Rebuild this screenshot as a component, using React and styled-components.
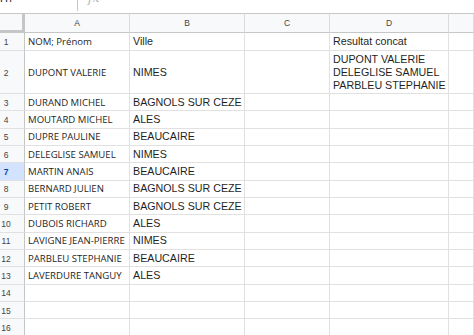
import React from "react";
import styled, { createGlobalStyle } from "styled-components";

const Global = createGlobalStyle`
  html, body { margin: 0; padding: 0; background: #fff; }
  body { width: 474px; height: 335px; overflow: hidden; font-family: "Liberation Sans", Arial, sans-serif; }
`;

const COLS = "25px 105px 115px 85px 119px 1fr";

const Page = styled.div`
  width: 474px;
  height: 335px;
  overflow: hidden;
  display: flex;
  flex-direction: column;
`;

const FormulaBar = styled.div`
  height: 13px;
  flex: none;
  overflow: hidden;
  display: flex;
  align-items: flex-end;
  background: #fff;
`;

const FormulaInner = styled.div`
  display: flex;
  align-items: center;
  height: 22px;
  margin-bottom: 4px;
`;

const NameBox = styled.div`
  width: 56px;
  font-size: 11px;
  color: #1f1f1f;
  font-family: "Liberation Sans", Arial, sans-serif;
`;

const Caret = styled.div`
  width: 0;
  height: 0;
  margin: 0 0 4px 4px;
  border-left: 3px solid transparent;
  border-right: 3px solid transparent;
  border-top: 4px solid #444;
`;

const Sep = styled.div`
  width: 1px;
  height: 18px;
  background: #c7c7c7;
  margin: 6px 0 0 11px;
  align-self: flex-start;
`;

const Fx = styled.div`
  margin-left: 10px;
  font-family: "DejaVu Serif", serif;
  font-style: italic;
  font-size: 12px;
  color: #b0b0b0;
`;

const Grid = styled.div`
  flex: 1;
  display: flex;
  flex-direction: column;
`;

const Row = styled.div`
  display: grid;
  grid-template-columns: ${COLS};
  height: ${(p) => p.$h}px;
  flex: none;
`;

const Corner = styled.div`
  background: #f8f9fa;
  border-top: 1px solid #c4c7c5;
  border-right: 3px solid #c4c7c5;
  border-bottom: 3px solid #c4c7c5;
  box-sizing: border-box;
`;

const ColHead = styled.div`
  background: #f8f9fa;
  border-top: 1px solid #c4c7c5;
  border-right: 1px solid #dadce0;
  border-bottom: 1px solid #c4c7c5;
  box-sizing: border-box;
  display: flex;
  align-items: center;
  justify-content: center;
  font-size: 8.5px;
  color: #444;
`;

const RowHead = styled.div`
  background: ${(p) => (p.$sel ? "#d3e3fd" : "#f8f9fa")};
  border-right: 1px solid #c4c7c5;
  border-bottom: 1px solid #e1e1e1;
  box-sizing: border-box;
  display: flex;
  align-items: center;
  justify-content: center;
  padding-right: 12px;
  padding-top: 1px;
  font-size: 8.5px;
  font-weight: ${(p) => (p.$sel ? 700 : 400)};
  color: ${(p) => (p.$sel ? "#0842a0" : "#444")};
`;

const Cell = styled.div`
  border-right: 1px solid #e1e1e1;
  border-bottom: 1px solid #e1e1e1;
  box-sizing: border-box;
  display: flex;
  align-items: center;
  padding: 0 3px;
  overflow: hidden;
  white-space: nowrap;
  font-family: ${(p) =>
    p.$calibri ? '"Open Sans", sans-serif' : '"Liberation Sans", Arial, sans-serif'};
  font-size: ${(p) => (p.$calibri ? "9.6px" : "10.7px")};
  line-height: 13px;
  color: #1f1f1f;
`;

const Lines = styled.div`
  display: flex;
  flex-direction: column;
  white-space: nowrap;
`;

const data = [
  ["DURAND MICHEL", "BAGNOLS SUR CEZE"],
  ["MOUTARD MICHEL", "ALES"],
  ["DUPRE PAULINE", "BEAUCAIRE"],
  ["DELEGLISE SAMUEL", "NIMES"],
  ["MARTIN ANAIS", "BEAUCAIRE"],
  ["BERNARD JULIEN", "BAGNOLS SUR CEZE"],
  ["PETIT ROBERT", "BAGNOLS SUR CEZE"],
  ["DUBOIS RICHARD", "ALES"],
  ["LAVIGNE JEAN-PIERRE", "NIMES"],
  ["PARBLEU STEPHANIE", "BEAUCAIRE"],
  ["LAVERDURE TANGUY", "ALES"],
  ["", ""],
  ["", ""],
  ["", ""],
];

export default function App() {
  return (
    <Page>
      <Global />
      <FormulaBar>
        <FormulaInner>
          <NameBox>H7</NameBox>
          <Caret />
          <Sep />
          <Fx>fx</Fx>
        </FormulaInner>
      </FormulaBar>
      <Grid>
        <Row $h={20}>
          <Corner />
          <ColHead>A</ColHead>
          <ColHead>B</ColHead>
          <ColHead>C</ColHead>
          <ColHead>D</ColHead>
          <ColHead />
        </Row>
        <Row $h={18}>
          <RowHead>1</RowHead>
          <Cell $calibri>NOM; Prénom</Cell>
          <Cell>Ville</Cell>
          <Cell />
          <Cell>Resultat concat</Cell>
          <Cell />
        </Row>
        <Row $h={43}>
          <RowHead>2</RowHead>
          <Cell $calibri>DUPONT VALERIE</Cell>
          <Cell>NIMES</Cell>
          <Cell />
          <Cell>
            <Lines>
              <span>DUPONT VALERIE</span>
              <span>DELEGLISE SAMUEL</span>
              <span>PARBLEU STEPHANIE</span>
            </Lines>
          </Cell>
          <Cell />
        </Row>
        {data.map(([a, b], i) => (
          <Row key={i} $h={17.33}>
            <RowHead $sel={i + 3 === 7}>{i + 3}</RowHead>
            <Cell $calibri>{a}</Cell>
            <Cell>{b}</Cell>
            <Cell />
            <Cell />
            <Cell />
          </Row>
        ))}
      </Grid>
    </Page>
  );
}
